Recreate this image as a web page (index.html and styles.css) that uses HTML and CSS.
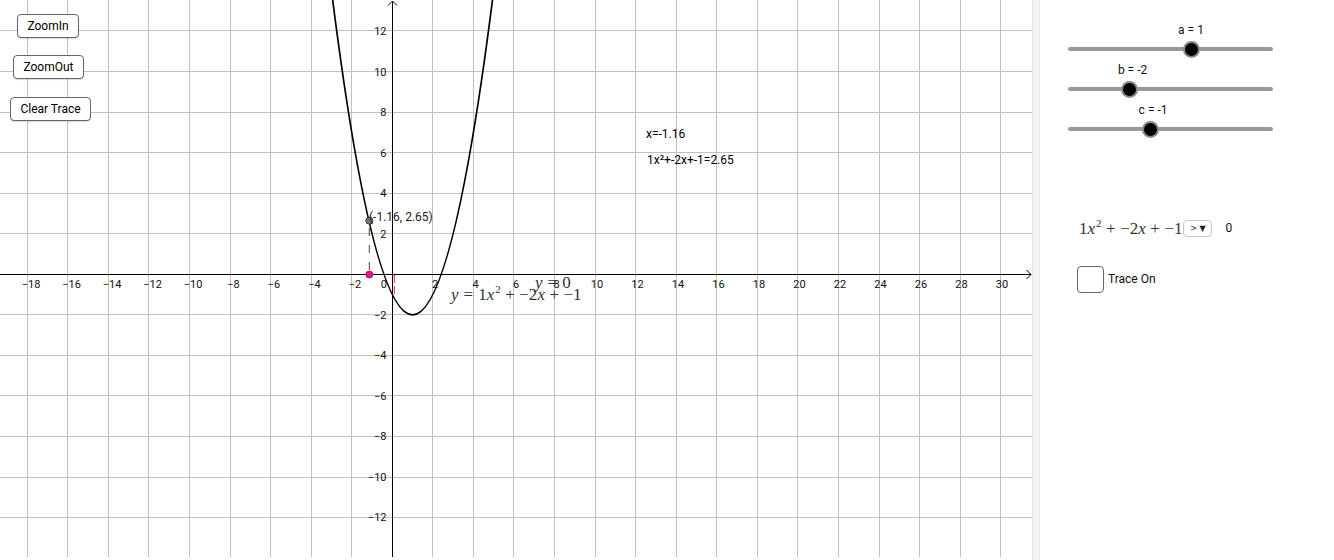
FILE: index.html
```html
<!DOCTYPE html>
<html>
<head>
<meta charset="utf-8">
<link rel="stylesheet" href="styles.css">
</head>
<body>
<div class="app">
  <div class="graphics">
    <svg class="plot" width="1032" height="560" viewBox="0 0 1032 560">
      <path class="grid" d="M27.26 0V557M67.82 0V557M108.38 0V557M148.94 0V557M189.5 0V557M230.06 0V557M270.62 0V557M311.18 0V557M351.74 0V557M432.86 0V557M473.42 0V557M513.98 0V557M554.54 0V557M595.1 0V557M635.66 0V557M676.22 0V557M716.78 0V557M757.34 0V557M797.9 0V557M838.46 0V557M879.02 0V557M919.58 0V557M960.14 0V557M1000.7 0V557M0 30.94H1032M0 71.5H1032M0 112.06H1032M0 152.62H1032M0 193.18H1032M0 233.74H1032M0 314.86H1032M0 355.42H1032M0 395.98H1032M0 436.54H1032M0 477.1H1032M0 517.66H1032"/>
      <path class="axis" d="M0 274.5H1031M392.5 557V1"/>
      <path class="arrow" d="M1026.5 270L1031 274.5L1026.5 279M388 5.5L392.5 1L397 5.5"/>
      <g class="xlab">
        <text x="31" y="288">−18</text>
        <text x="71.5" y="288">−16</text>
        <text x="112" y="288">−14</text>
        <text x="152.5" y="288">−12</text>
        <text x="193" y="288">−10</text>
        <text x="233.5" y="288">−8</text>
        <text x="274" y="288">−6</text>
        <text x="314.5" y="288">−4</text>
        <text x="355" y="288">−2</text>
        <text x="435" y="288">2</text>
        <text x="475.5" y="288">4</text>
        <text x="516" y="288">6</text>
        <text x="556.5" y="288">8</text>
        <text x="597" y="288">10</text>
        <text x="637.5" y="288">12</text>
        <text x="678" y="288">14</text>
        <text x="718.5" y="288">16</text>
        <text x="759" y="288">18</text>
        <text x="799.5" y="288">20</text>
        <text x="840" y="288">22</text>
        <text x="880.5" y="288">24</text>
        <text x="921" y="288">26</text>
        <text x="961.5" y="288">28</text>
        <text x="1002" y="288">30</text>
      </g>
      <text class="ylab" x="387" y="288">0</text>
      <g class="ylab">
        <text x="386.5" y="35">12</text>
        <text x="386.5" y="75.5">10</text>
        <text x="386.5" y="116">8</text>
        <text x="386.5" y="156.5">6</text>
        <text x="386.5" y="197">4</text>
        <text x="386.5" y="237.5">2</text>
        <text x="386.5" y="318.5">−2</text>
        <text x="386.5" y="359">−4</text>
        <text x="386.5" y="399.5">−6</text>
        <text x="386.5" y="440">−8</text>
        <text x="386.5" y="480.5">−10</text>
        <text x="386.5" y="521">−12</text>
      </g>
      <path class="curve" d="M331.46 -9.62Q412.58 639.34 493.7 -9.62"/>
      <path class="drop" d="M369.3 228V270"/>
      <path class="trace" d="M394.3 275V297"/>
      <circle class="pt" cx="369.3" cy="220.7" r="3.5"/>
      <circle class="pt-pink" cx="369.3" cy="274.5" r="3.5"/>
    </svg>

    <button class="ggb-btn btn-in">ZoomIn</button>
    <button class="ggb-btn btn-out">ZoomOut</button>
    <button class="ggb-btn btn-clear">Clear Trace</button>

    <div class="canvas-text txt-x">x=-1.16</div>
    <div class="canvas-text txt-val">1x²+-2x+-1=2.65</div>
    <div class="canvas-text pt-label">(-1.16, 2.65)</div>

    <div class="math eq-y0"><i>y</i><span class="rel">=</span>0</div>
    <div class="math eq-f"><i>y</i><span class="rel">=</span>1<i>x</i><sup>2</sup><span class="bin">+</span>−2<i>x</i><span class="bin">+</span>−1</div>
  </div>

  <div class="splitter"></div>

  <div class="side">
    <div class="slider">
      <div class="slider-head"><span class="slider-label" style="left:60%">a = 1</span></div>
      <div class="track"><span class="knob" style="left:60%"></span></div>
    </div>
    <div class="slider">
      <div class="slider-head"><span class="slider-label" style="left:31.5%">b = -2</span></div>
      <div class="track"><span class="knob" style="left:30%"></span></div>
    </div>
    <div class="slider">
      <div class="slider-head"><span class="slider-label" style="left:41.5%">c = -1</span></div>
      <div class="track"><span class="knob" style="left:40%"></span></div>
    </div>

    <div class="ineq-row">
      <span class="math ineq">1<i>x</i><sup>2</sup><span class="bin">+</span>−2<i>x</i><span class="bin">+</span>−1</span>
      <span class="select">&gt; <span class="caret">▼</span></span>
      <span class="rhs">0</span>
    </div>

    <label class="check-row">
      <span class="checkbox"></span>
      <span class="check-label">Trace On</span>
    </label>
  </div>
</div>
</body>
</html>
```
FILE: styles.css
```css
* { box-sizing: border-box; }
html, body {
  margin: 0;
  padding: 0;
  background: #fff;
}
body {
  font-family: Roboto, "Liberation Sans", sans-serif;
  color: #000;
  width: 1334px;
  height: 560px;
  overflow: hidden;
}
.app {
  display: flex;
  width: 1334px;
  height: 560px;
}
.graphics {
  position: relative;
  width: 1032px;
  height: 560px;
  flex: none;
  background: #fff;
}
.plot {
  display: block;
}
.grid {
  stroke: #c0c0c0;
  stroke-width: 1;
  fill: none;
  shape-rendering: crispEdges;
}
.axis {
  stroke: #000;
  stroke-width: 1;
  fill: none;
  shape-rendering: crispEdges;
}
.arrow {
  stroke: #000;
  stroke-width: 1;
  fill: none;
}
.xlab text, .ylab text, text.ylab {
  font-family: Roboto, "Liberation Sans", sans-serif;
  font-size: 11px;
  fill: #111;
}
.xlab text { text-anchor: middle; }
.ylab text, text.ylab { text-anchor: end; }
.curve {
  fill: none;
  stroke: #000;
  stroke-width: 1.7;
}
.drop {
  stroke: #444;
  stroke-width: 1;
  stroke-dasharray: 8 9;
  fill: none;
}
.trace {
  stroke: #e0168a;
  stroke-width: 1;
  stroke-dasharray: 8 3;
  fill: none;
}
.pt {
  fill: #7a7a7a;
  stroke: #333;
  stroke-width: 1;
}
.pt-pink {
  fill: #e6168c;
  stroke: #b3006b;
  stroke-width: 0.8;
}

.ggb-btn {
  position: absolute;
  height: 24px;
  padding: 0;
  background: #fff;
  border: 1.5px solid #666;
  border-radius: 4px;
  font-family: Roboto, "Liberation Sans", sans-serif;
  font-size: 12px;
  color: #000;
  box-shadow: 0 1px 1px rgba(0,0,0,0.15);
}
.btn-in { left: 17px; top: 14px; width: 62px; }
.btn-out { left: 13px; top: 55px; width: 71px; }
.btn-clear { left: 10px; top: 97px; width: 81px; }

.canvas-text {
  position: absolute;
  font-size: 12px;
  line-height: 14px;
  white-space: nowrap;
  color: #000;
}
.txt-x { left: 646px; top: 127px; }
.txt-val { left: 647px; top: 153px; }
.pt-label { left: 369px; top: 210px; color: #222; }

.math {
  font-family: "Liberation Serif", "DejaVu Serif", serif;
  font-size: 17px;
  line-height: 17px;
  white-space: nowrap;
  color: #333;
}
.math i { font-style: italic; }
.math sup {
  font-size: 11px;
  line-height: 0;
  vertical-align: 7px;
  padding-left: 1px;
}
.math .rel { padding: 0 5px; }
.math .bin { padding: 0 4.5px; }
.eq-y0, .eq-f { position: absolute; }
.eq-y0 { left: 535px; top: 274px; }
.eq-f { left: 451px; top: 286px; }

.splitter {
  flex: none;
  width: 8px;
  height: 560px;
  background: #f2f2f2;
  border-left: 1px solid #e2e2e2;
  border-right: 1px solid #e6e6e6;
}

.side {
  flex: 1;
  display: flex;
  flex-direction: column;
  padding-top: 23px;
  background: #fff;
}
.slider {
  width: 205px;
  height: 40px;
  margin-left: 28px;
  display: flex;
  flex-direction: column;
}
.slider-head {
  position: relative;
  height: 14px;
}
.slider-label {
  position: absolute;
  top: 0;
  transform: translateX(-50%);
  font-size: 12px;
  line-height: 14px;
  white-space: nowrap;
  color: #111;
}
.track {
  position: relative;
  margin-top: 10px;
  height: 4px;
  background: #999;
  border-radius: 2px;
}
.knob {
  position: absolute;
  top: 50%;
  width: 17px;
  height: 17px;
  margin-left: -8.5px;
  margin-top: -8.5px;
  border-radius: 50%;
  background: #000;
  border: 2.5px solid #8a8a8a;
}

.ineq-row {
  display: flex;
  align-items: center;
  height: 20px;
  margin-top: 75px;
  margin-left: 39px;
}
.ineq { color: #333; }
.select {
  margin-left: 1px;
  width: 29px;
  height: 17px;
  border: 1px solid #c8c8c8;
  border-radius: 4px;
  font-family: "DejaVu Sans", sans-serif;
  font-size: 8px;
  line-height: 15px;
  text-align: center;
  color: #222;
}
.caret { font-size: 8px; }
.rhs {
  margin-left: 13px;
  font-size: 12px;
  color: #111;
}

.check-row {
  display: flex;
  align-items: center;
  margin-top: 28px;
  margin-left: 37px;
}
.checkbox {
  width: 27px;
  height: 27px;
  border: 1.5px solid #666;
  border-radius: 4px;
  background: #fff;
}
.check-label {
  margin-left: 4px;
  margin-top: -1px;
  font-size: 12px;
  color: #111;
}
```
